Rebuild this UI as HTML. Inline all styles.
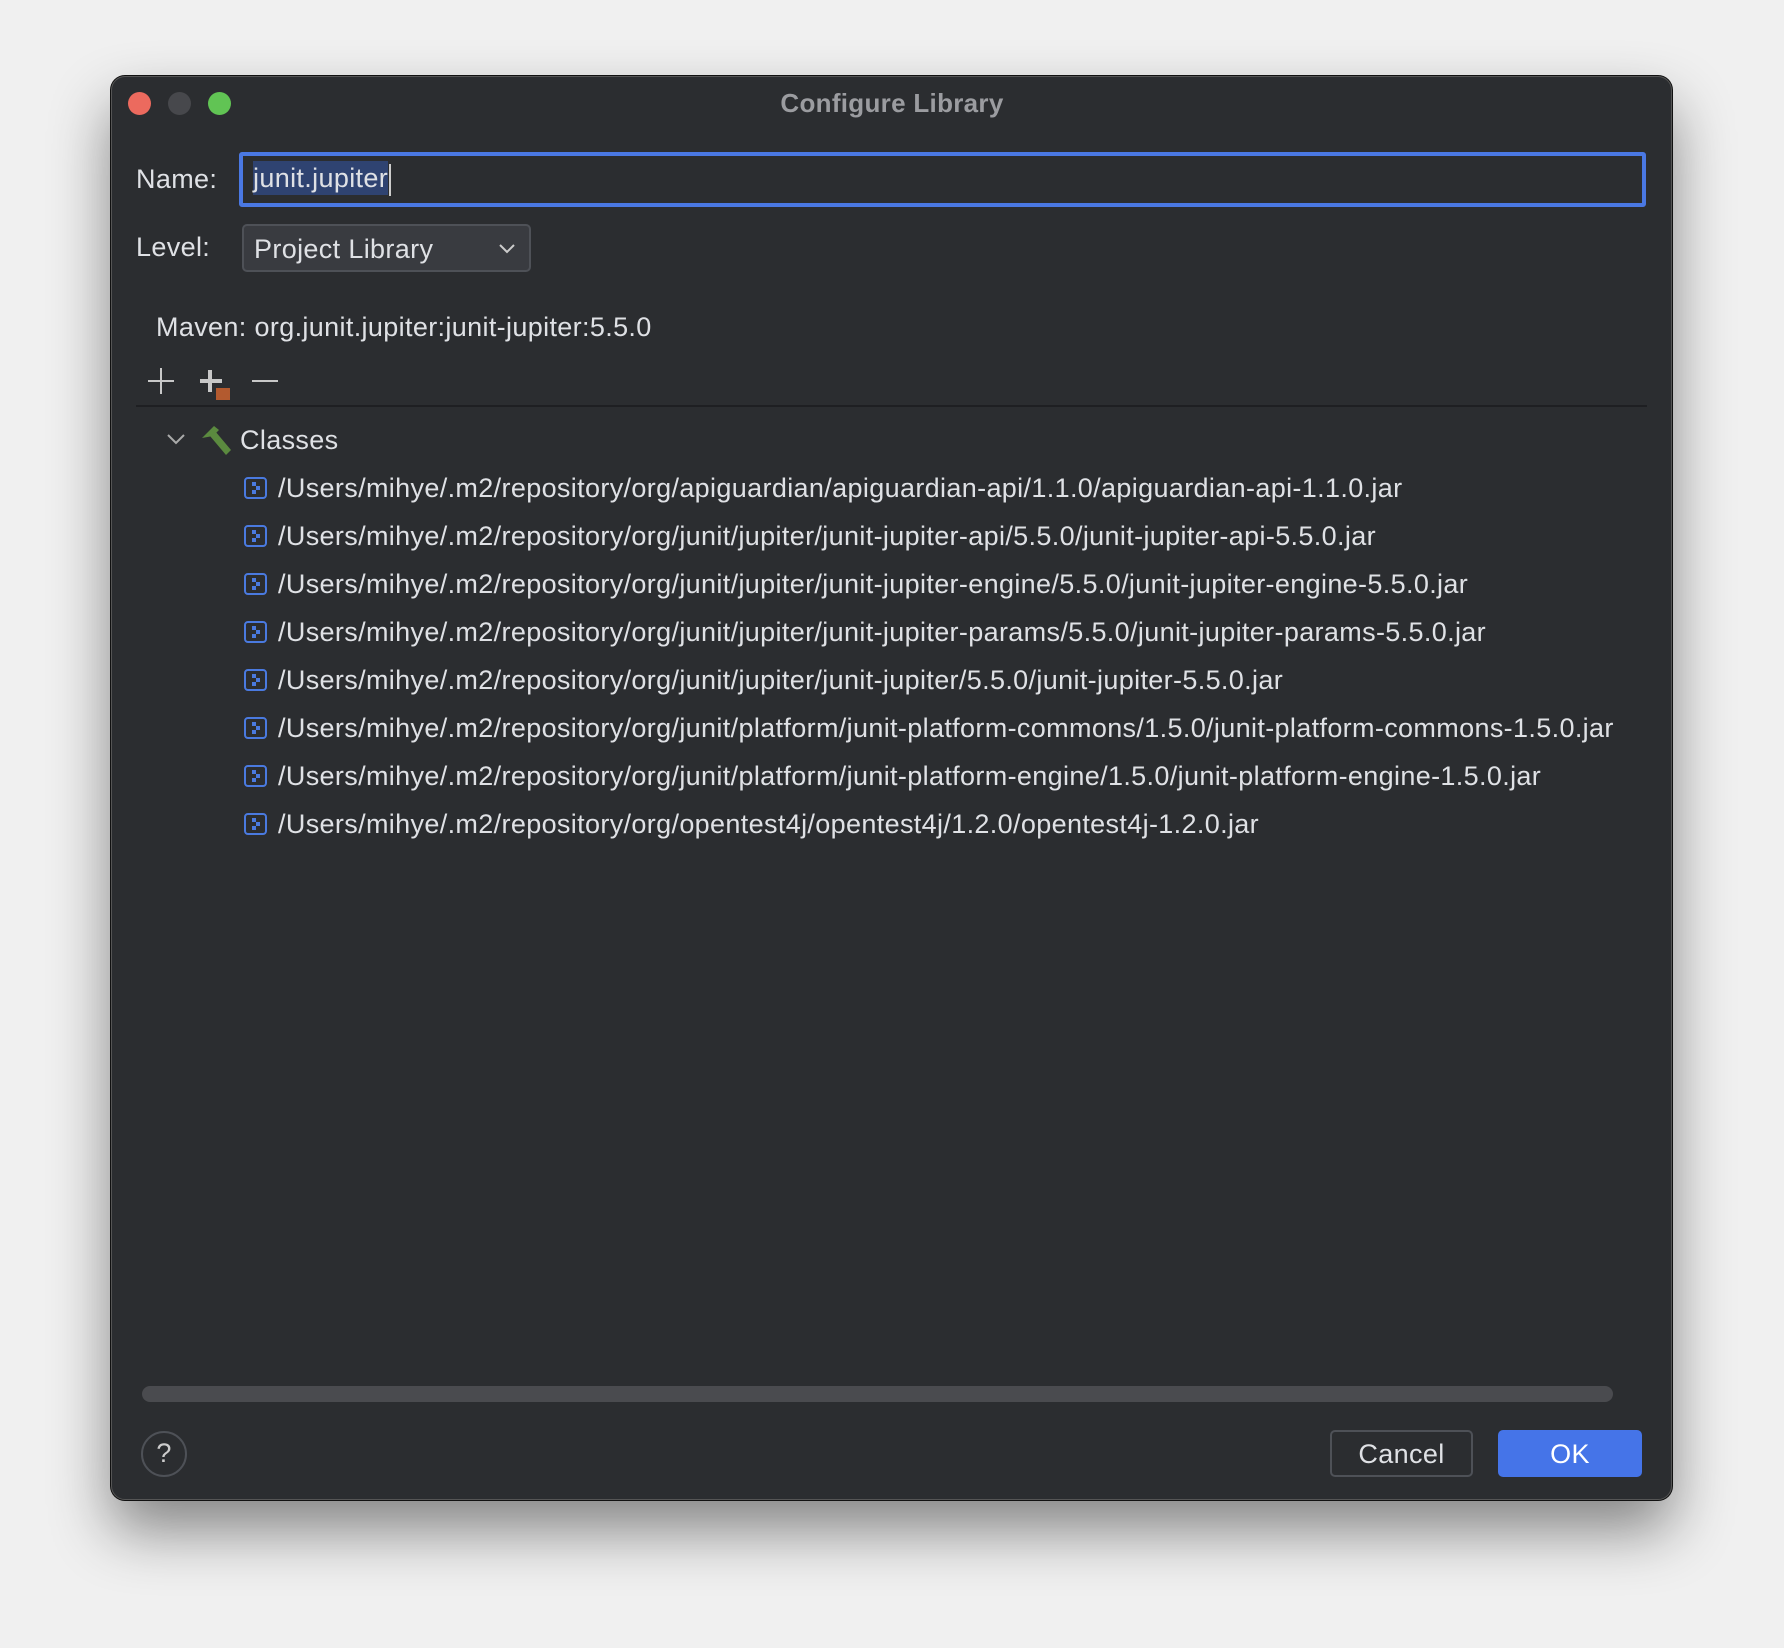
<!DOCTYPE html>
<html><head><meta charset="utf-8"><style>
*{margin:0;padding:0;box-sizing:border-box}
body{width:1784px;height:1648px;background:#f0f0f0;position:relative;overflow:hidden;font-family:"Liberation Sans",sans-serif;color:#dfe1e5}
.win{position:absolute;left:111px;top:76px;width:1561px;height:1424px;background:#2b2d30;border-radius:14px;border:1px solid #555;box-shadow:0 0 0 1px #111,0 30px 60px rgba(0,0,0,.45)}
.abs{position:absolute}
.dot{position:absolute;width:23px;height:23px;border-radius:50%;top:92px}
.t{position:absolute;font-size:27px;letter-spacing:0.35px;white-space:nowrap;line-height:30px}
.row .ic{position:absolute;left:244px;width:23px;height:22px;border:2px solid #4a7ae0;border-radius:4px}
.ic i{position:absolute;width:4px;height:4px;background:#4a7ae0}
</style></head><body>
<div class="win"></div>
<div class="dot" style="left:128px;background:#ec6a5e"></div>
<div class="dot" style="left:168px;background:#47484c"></div>
<div class="dot" style="left:208px;background:#61c454"></div>
<div class="t" style="left:0;width:1784px;text-align:center;top:88px;font-weight:bold;color:#9b9ca0;font-size:26px;letter-spacing:0.3px">Configure Library</div>

<div class="t" style="left:136px;top:164px">Name:</div>
<div class="abs" style="left:239px;top:152px;width:1407px;height:55px;border:4px solid #4a78e3;border-radius:3px"></div>
<div class="t" style="left:253px;top:163px"><span style="background:#2f4371;padding:2px 0">junit.jupiter</span><span style="display:inline-block;width:2px;height:32px;background:#ccc;vertical-align:middle;margin-left:1px"></span></div>

<div class="t" style="left:136px;top:232px">Level:</div>
<div class="abs" style="left:242px;top:224px;width:289px;height:48px;background:#393b40;border:2px solid #4e5157;border-radius:5px"></div>
<div class="t" style="left:254px;top:234px">Project Library</div>
<svg class="abs" style="left:498px;top:242px" width="18" height="12"><path d="M2 3l7 7 7-7" stroke="#ccc" stroke-width="2" fill="none"/></svg>

<div class="t" style="left:156px;top:312px">Maven: org.junit.jupiter:junit-jupiter:5.5.0</div>

<svg class="abs" style="left:140px;top:362px" width="150" height="40">
<path d="M8 19h26M21 6v26" stroke="#c8c8c8" stroke-width="2"/>
<path d="M60 19h22M70 8v22" stroke="#c8c8c8" stroke-width="4"/>
<rect x="76" y="26" width="14" height="12" fill="#b35a2f"/>
<path d="M112 19h26" stroke="#c8c8c8" stroke-width="2"/>
</svg>
<div class="abs" style="left:136px;top:405px;width:1511px;height:2px;background:#1e1f22"></div>

<svg class="abs" style="left:166px;top:432px" width="20" height="14"><path d="M2 3l8 8 8-8" stroke="#aaa" stroke-width="2" fill="none"/></svg>
<svg class="abs" style="left:200px;top:424px" width="34" height="32"><path d="M2 14l12-12 5 4-6 6z" fill="#5b8a3f"/><path d="M10 12l5-5 16 19-5 5z" fill="#5b8a3f"/></svg>
<div class="t" style="left:240px;top:425px">Classes</div>

<div class="row">
<div class="ic" style="top:477px"><i style="left:6px;top:3px"></i><i style="left:10px;top:7px"></i><i style="left:6px;top:11px"></i></div>
<div class="t" style="left:278px;top:473px">/Users/mihye/.m2/repository/org/apiguardian/apiguardian-api/1.1.0/apiguardian-api-1.1.0.jar</div>
<div class="ic" style="top:525px"><i style="left:6px;top:3px"></i><i style="left:10px;top:7px"></i><i style="left:6px;top:11px"></i></div>
<div class="t" style="left:278px;top:521px">/Users/mihye/.m2/repository/org/junit/jupiter/junit-jupiter-api/5.5.0/junit-jupiter-api-5.5.0.jar</div>
<div class="ic" style="top:573px"><i style="left:6px;top:3px"></i><i style="left:10px;top:7px"></i><i style="left:6px;top:11px"></i></div>
<div class="t" style="left:278px;top:569px">/Users/mihye/.m2/repository/org/junit/jupiter/junit-jupiter-engine/5.5.0/junit-jupiter-engine-5.5.0.jar</div>
<div class="ic" style="top:621px"><i style="left:6px;top:3px"></i><i style="left:10px;top:7px"></i><i style="left:6px;top:11px"></i></div>
<div class="t" style="left:278px;top:617px">/Users/mihye/.m2/repository/org/junit/jupiter/junit-jupiter-params/5.5.0/junit-jupiter-params-5.5.0.jar</div>
<div class="ic" style="top:669px"><i style="left:6px;top:3px"></i><i style="left:10px;top:7px"></i><i style="left:6px;top:11px"></i></div>
<div class="t" style="left:278px;top:665px">/Users/mihye/.m2/repository/org/junit/jupiter/junit-jupiter/5.5.0/junit-jupiter-5.5.0.jar</div>
<div class="ic" style="top:717px"><i style="left:6px;top:3px"></i><i style="left:10px;top:7px"></i><i style="left:6px;top:11px"></i></div>
<div class="t" style="left:278px;top:713px">/Users/mihye/.m2/repository/org/junit/platform/junit-platform-commons/1.5.0/junit-platform-commons-1.5.0.jar</div>
<div class="ic" style="top:765px"><i style="left:6px;top:3px"></i><i style="left:10px;top:7px"></i><i style="left:6px;top:11px"></i></div>
<div class="t" style="left:278px;top:761px">/Users/mihye/.m2/repository/org/junit/platform/junit-platform-engine/1.5.0/junit-platform-engine-1.5.0.jar</div>
<div class="ic" style="top:813px"><i style="left:6px;top:3px"></i><i style="left:10px;top:7px"></i><i style="left:6px;top:11px"></i></div>
<div class="t" style="left:278px;top:809px">/Users/mihye/.m2/repository/org/opentest4j/opentest4j/1.2.0/opentest4j-1.2.0.jar</div>
</div>

<div class="abs" style="left:142px;top:1386px;width:1471px;height:16px;background:#4a4b4f;border-radius:8px"></div>

<div class="abs" style="left:141px;top:1431px;width:46px;height:46px;border:2px solid #4e5157;border-radius:50%"></div>
<div class="t" style="left:141px;top:1438px;width:46px;text-align:center;color:#ccc">?</div>
<div class="abs" style="left:1330px;top:1430px;width:143px;height:47px;border:2px solid #4e5157;border-radius:5px"></div>
<div class="t" style="left:1330px;top:1439px;width:143px;text-align:center">Cancel</div>
<div class="abs" style="left:1498px;top:1430px;width:144px;height:47px;background:#4574e8;border-radius:5px"></div>
<div class="t" style="left:1498px;top:1439px;width:144px;text-align:center;color:#fff">OK</div>
</body></html>
